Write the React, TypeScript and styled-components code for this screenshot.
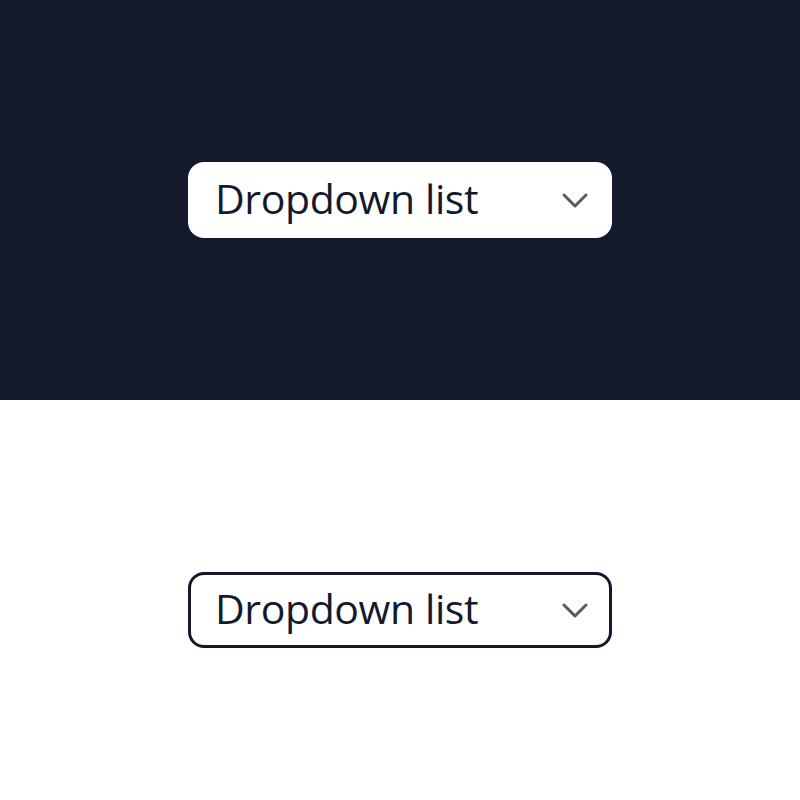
import React from "react";
import styled, { createGlobalStyle } from "styled-components";

const Global = createGlobalStyle`
  html, body { margin: 0; padding: 0; }
  body { font-family: "Open Sans", "Noto Sans", sans-serif; background: #ffffff; }
`;

const Page = styled.div`
  width: 800px;
  height: 800px;
  display: flex;
  flex-direction: column;
`;

const Section = styled.section<{ $dark?: boolean }>`
  height: 400px;
  box-sizing: border-box;
  background: ${(p) => (p.$dark ? "#141a2b" : "#ffffff")};
  display: flex;
  justify-content: center;
  align-items: ${(p) => (p.$dark ? "center" : "flex-start")};
  padding-top: ${(p) => (p.$dark ? "0" : "172px")};
`;

const Select = styled.div<{ $outlined?: boolean }>`
  width: 424px;
  height: 76px;
  box-sizing: border-box;
  border-radius: 16px;
  background: #ffffff;
  border: ${(p) => (p.$outlined ? "3px solid #141a2b" : "none")};
  display: flex;
  align-items: center;
  justify-content: space-between;
  padding: 0 ${(p) => (p.$outlined ? "21px" : "24px")} 0 ${(p) => (p.$outlined ? "24px" : "27px")};
`;

const Label = styled.span`
  font-size: 41px;
  color: #141a2b;
  line-height: 1;
  letter-spacing: -0.4px;
  margin-bottom: 3px;
`;

const Chevron = () => (
  <svg width="26" height="17" viewBox="0 0 26 17" fill="none">
    <path d="M2 3 L13 14 L24 3" stroke="#5a5a5c" strokeWidth="3" strokeLinecap="round" strokeLinejoin="round" />
  </svg>
);

const Dropdown = ({ outlined }: { outlined?: boolean }) => (
  <Select $outlined={outlined}>
    <Label>Dropdown list</Label>
    <Chevron />
  </Select>
);

export default function App() {
  return (
    <>
      <Global />
      <Page>
        <Section $dark>
          <Dropdown />
        </Section>
        <Section>
          <Dropdown outlined />
        </Section>
      </Page>
    </>
  );
}
